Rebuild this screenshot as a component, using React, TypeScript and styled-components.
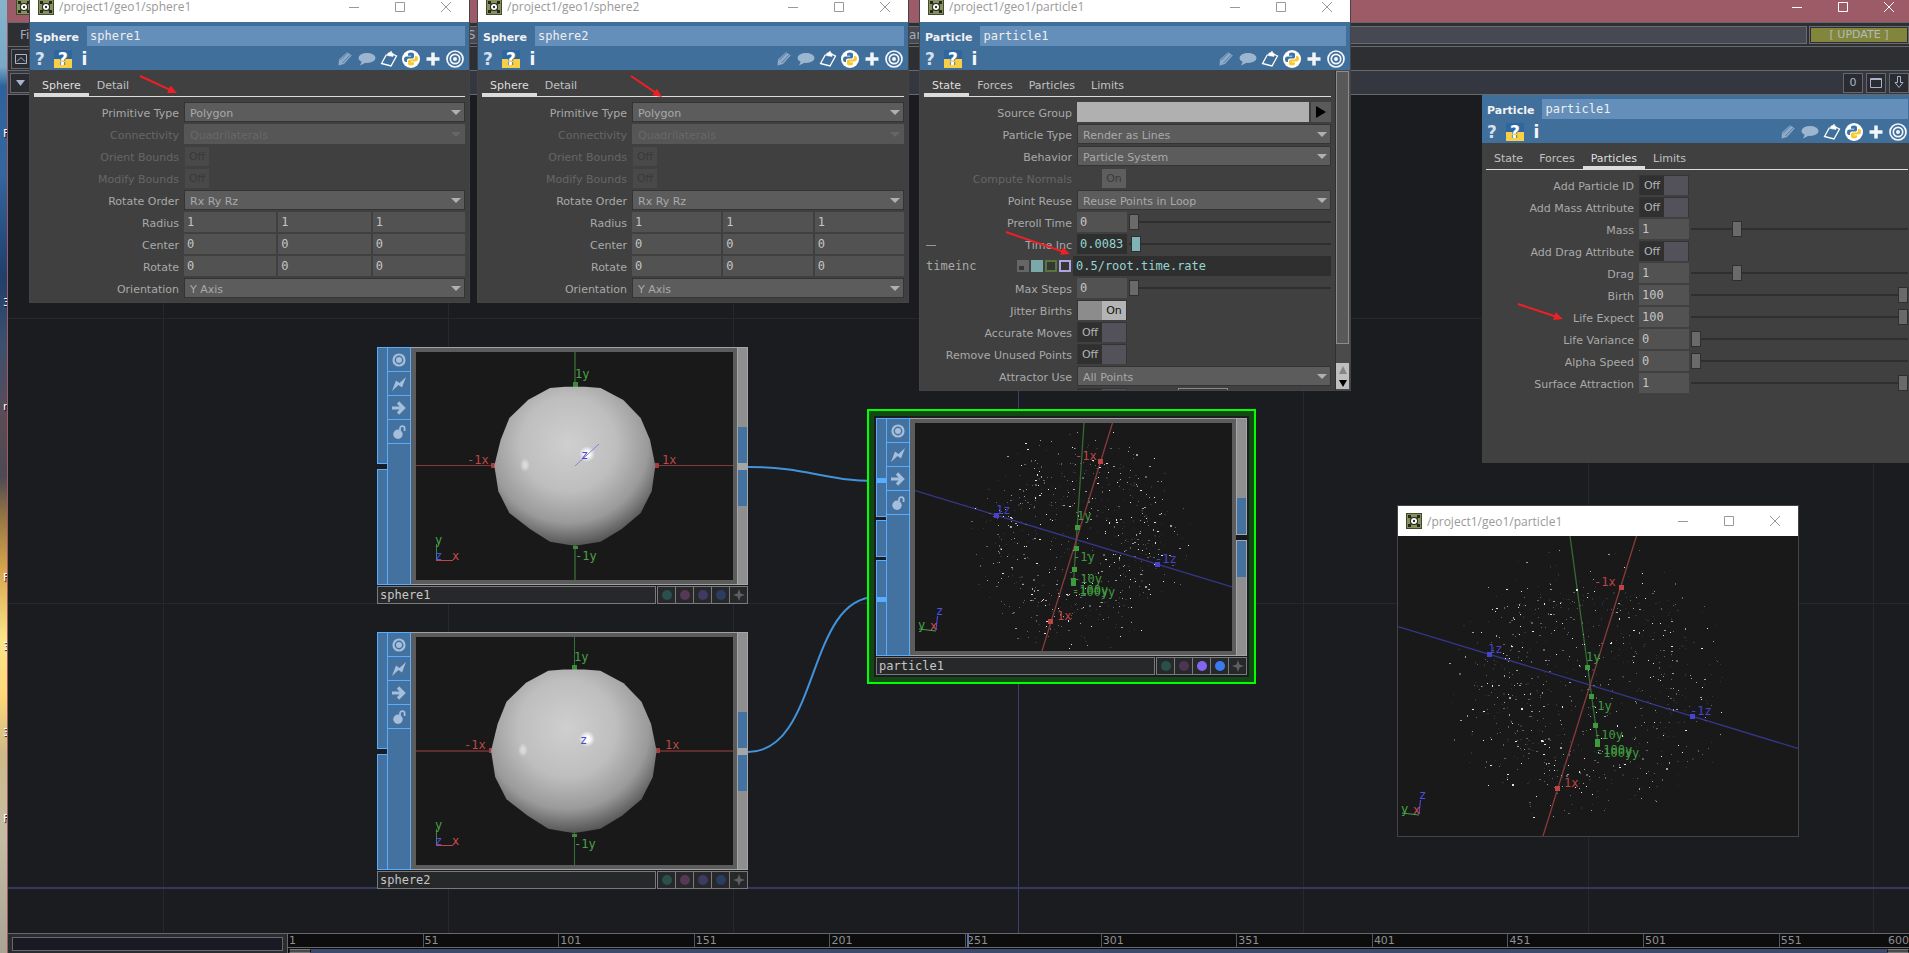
import React, { useId } from "react";
import styled, { createGlobalStyle, css } from "styled-components";

const sans = `"DejaVu Sans", Verdana, sans-serif`;
const mono = `"DejaVu Sans Mono", monospace`;
const system = `"Open Sans", "Segoe UI", sans-serif`;

const GlobalStyle = createGlobalStyle`
  *, *::before, *::after { box-sizing: border-box; }
  body { margin: 0; background: #1a1b1f; font-family: ${sans}; font-size: 11px; overflow: hidden; }
  button, input, select { font: inherit; color: inherit; margin: 0; padding: 0; border: 0; border-radius: 0; outline: 0; }
  button { background: none; display: flex; align-items: center; justify-content: center; }
  svg { display: block; }
`;

/* ---------- application shell ---------- */

const Screen = styled.div`
  position: relative;
  display: flex;
  height: 100vh;
  overflow: hidden;
`;

const Desktop = styled.aside`
  position: relative;
  flex: 0 0 7px;
  overflow: hidden;
  background: linear-gradient(#86b4cc 0, #79a9c6 7%, #2d639c 9%, #3467a0 18%, #203f6c 29%, #3c506f 36%,
    #5a4c56 44%, #4c4a54 50%, #927443 54%, #d9a84c 60%, #fae58a 67%, #fdd878 73%, #cdb987 79%, #c3bda5 88%, #a9a493 100%);
`;

const DesktopLabel = styled.span<{ $top: number }>`
  position: absolute;
  left: 3px;
  top: ${(p) => p.$top}px;
  color: #fff;
  line-height: 12px;
  text-shadow: 1px 1px 1px #000;
`;

const AppFrame = styled.main`
  flex: 1;
  min-width: 0;
  display: flex;
  flex-direction: column;
  border-left: 1px solid #9d5b67;
`;

const AppTitle = styled.header`
  display: flex;
  align-items: center;
  height: 22px;
  padding: 0 0 9px 8px;
  background: #9d5b67;
  color: #fff;
  font: 12px ${system};
`;

const AppTitleText = styled.span`
  padding-left: 445px;
`;

const MenuBar = styled.nav`
  display: flex;
  align-items: center;
  gap: 2px;
  height: 24px;
  border-top: 1px solid #66686c;
  background: #2e2f33;
  color: #a3acbc;
  font-size: 12px;
`;

const MenuButton = styled.button`
  width: 36px;
  padding-left: 12px;
  justify-content: flex-start;
`;

const AddressField = styled.div`
  flex: 1;
  display: flex;
  align-items: center;
  height: 18px;
  padding-left: 417px;
  gap: 426px;
  border: 1px solid #6a6c72;
  background: #464952;
`;

const UpdateButton = styled.button`
  width: 100px;
  height: 18px;
  border: 1px solid #6a6c72;
  background: #82853c;
  box-shadow: inset 0 0 0 1px #2e2f33;
  color: #b3bbba;
  font-size: 11px;
`;

const ToolBar = styled.div<{ $pane?: boolean }>`
  display: flex;
  align-items: center;
  gap: 3px;
  height: ${(p) => (p.$pane ? 25 : 24)}px;
  padding-left: ${(p) => (p.$pane ? 2 : 3)}px;
  border-top: 1px solid #66686c;
  border-bottom: ${(p) => (p.$pane ? "1px solid #66686c" : "0")};
  background: ${(p) => (p.$pane ? "#343740" : "#2e2f33")};
  color: #a9b3cc;
`;

const ToolButton = styled.button`
  width: 20px;
  height: 20px;
  border: 1px solid #66686c;
  background: #2b2c31;
`;

const Spacer = styled.span`
  flex: 1;
`;

const Canvas = styled.section`
  position: relative;
  flex: 1;
  min-height: 0;
  overflow: hidden;
  background-color: #1b1c20;
  background-image:
    linear-gradient(#403e70, #403e70),
    linear-gradient(#37375e, #37375e),
    linear-gradient(90deg, #27282d 1px, transparent 1px),
    linear-gradient(#27282d 1px, transparent 1px);
  background-size: 1px 100%, 100% 2px, 285px 285px, 285px 285px;
  background-position: 1010px 0, 0 792px, 155px 0, 0 223px;
  background-repeat: no-repeat, no-repeat, repeat, repeat;
`;

const Wires = styled.svg`
  position: absolute;
  left: 0;
  top: 0;
  width: 100%;
  height: 100%;
`;

/* ---------- timeline ---------- */

const Timeline = styled.footer`
  display: flex;
  height: 20px;
  border-top: 1px solid #66686c;
  background: #2b2c30;
`;

const TransportPanel = styled.div`
  width: 279px;
  padding: 3px 4px 0 4px;
`;

const TransportBox = styled.div`
  height: 14px;
  border: 1px solid #66686c;
  background: #191a24;
`;

const TimeTrack = styled.div`
  flex: 1;
  display: flex;
  flex-direction: column;
  border-left: 1px solid #66686c;
  background: #0d0d0e;
`;

const Ticks = styled.div`
  display: flex;
  height: 14px;
  border-bottom: 1px solid #66686c;
`;

const Tick = styled.span<{ $frames: number }>`
  position: relative;
  display: flex;
  justify-content: space-between;
  flex: ${(p) => p.$frames} 1 0;
  padding-left: 1px;
  color: #8f8f90;
  line-height: 13px;
  & + & { border-left: 1px solid #55565a; }
`;

const Playhead = styled.i`
  position: absolute;
  left: 1px;
  top: 0;
  width: 2px;
  height: 13px;
  background: #55709f;
`;

const RangeBar = styled.div`
  display: flex;
  justify-content: space-between;
  height: 4px;
  margin: 1px 0 0 1px;
  background: #3c4a6d;
`;

const RangeHandle = styled.span`
  width: 22px;
  border: 1px solid #77777a;
  border-right-color: #111;
  border-left-color: #111;
  background: #4a4a4a;
`;

/* ---------- floating windows ---------- */

const WindowBox = styled.section<{ $left: number; $width: number; $height: number; $top?: number }>`
  position: absolute;
  left: ${(p) => p.$left}px;
  top: ${(p) => p.$top ?? 0}px;
  width: ${(p) => p.$width}px;
  height: ${(p) => p.$height}px;
  display: flex;
  flex-direction: column;
  overflow: hidden;
  border: 1px solid #444448;
  border-top-width: ${(p) => (p.$top ? 1 : 0)}px;
`;

const DockedPanel = styled.section`
  position: absolute;
  top: 0;
  right: 0;
  width: 427px;
  height: 368px;
  display: flex;
  flex-direction: column;
`;

const WindowTitle = styled.header<{ $cut?: boolean }>`
  flex: none;
  display: flex;
  align-items: center;
  gap: 5px;
  height: ${(p) => (p.$cut ? 22 : 30)}px;
  padding: 0 0 ${(p) => (p.$cut ? 9 : 0)}px 8px;
  background: #fff;
  color: #999;
  font: 12px ${system};
`;

const Controls = styled.div<{ $bleed?: boolean }>`
  display: flex;
  margin-left: auto;
  margin-right: ${(p) => (p.$bleed ? -3 : 0)}px;
`;

const ControlButton = styled.button`
  width: 46px;
  height: 12px;
`;

const OpHeader = styled.div<{ $edge: number }>`
  flex: none;
  height: 48px;
  padding: 4px ${(p) => p.$edge}px 0 5px;
  background: #416f9b;
`;

const NameRow = styled.div`
  display: flex;
  align-items: center;
  gap: 8px;
  height: 20px;
`;

const OpType = styled.label`
  color: #f2f2f2;
  font-weight: bold;
  padding-top: 2px;
`;

const NameInput = styled.input`
  flex: 1;
  min-width: 0;
  height: 20px;
  padding: 0 3px;
  background: #648fba;
  color: #eee;
  font: 12px ${mono};
`;

const IconRow = styled.div`
  display: flex;
  align-items: center;
  height: 24px;
  gap: 4px;
  padding: 2px 1px 0 0;
`;

const IconButton = styled.button<{ $w?: number }>`
  width: ${(p) => p.$w ?? 18}px;
  height: 18px;
`;

const OpBody = styled.div`
  flex: 1;
  min-height: 0;
  display: flex;
  background: #404040;
  color: #a9a9a9;
`;

const OpPage = styled.div<{ $edge: number }>`
  flex: 1;
  min-width: 0;
  padding: 6px ${(p) => p.$edge}px 0 4px;
`;

const TabList = styled.div`
  display: flex;
  height: 21px;
  border-bottom: 1px solid #dcdcdc;
`;

const Tab = styled.button<{ $on: boolean }>`
  height: 20px;
  padding: 2px 8px 0;
  border-bottom: 3px solid ${(p) => (p.$on ? "#dcdcdc" : "transparent")};
  color: ${(p) => (p.$on ? "#dedede" : "#c0c0c0")};
`;

const Rows = styled.div`
  display: flex;
  flex-direction: column;
  gap: 2px;
  padding-top: 5px;
`;

const RowBox = styled.div<{ $label: number }>`
  display: grid;
  grid-template-columns: ${(p) => p.$label}px minmax(0, 1fr);
  height: 20px;
`;

const RowLabel = styled.label<{ $off?: boolean }>`
  display: flex;
  align-items: center;
  padding: 2px 5px 0 0;
  color: ${(p) => (p.$off ? "#666" : "#a9a9a9")};
  white-space: nowrap;
  & > span:last-child { margin-left: auto; }
`;

const Dash = styled.span`
  width: 10px;
  height: 1px;
  margin-left: 2px;
  background: #989898;
`;

const Fields = styled.div<{ $count?: number }>`
  display: grid;
  grid-template-columns: ${(p) => (p.$count ? `repeat(${p.$count}, minmax(0, 1fr))` : "50px minmax(0, 1fr)")};
  gap: 2px;
`;

const NumberInput = styled.input<{ $expr?: boolean }>`
  width: 100%;
  min-width: 0;
  height: 20px;
  padding: 0 3px;
  background: ${(p) => (p.$expr ? "#2f2f2f" : "#525252")};
  color: ${(p) => (p.$expr ? "#93d6d3" : "#c4c4c4")};
  font: 12px ${mono};
`;

const MenuBox = styled.span<{ $off?: boolean }>`
  position: relative;
  display: block;
  height: 20px;
  &::after {
    content: "";
    position: absolute;
    right: 4px;
    top: 8px;
    border: 5px solid transparent;
    border-top-color: ${(p) => (p.$off ? "#666" : "#b0b0b0")};
    border-bottom-width: 0;
    pointer-events: none;
  }
`;

const Menu = styled.select`
  appearance: none;
  width: 100%;
  height: 20px;
  padding: 2px 5px 0 5px;
  border: 1px solid #343434;
  background: #5c5c5c;
  color: #a9a9a9;
  &:disabled { border-color: #565656; background: #565656; color: #686868; opacity: 1; }
`;

const ToggleBox = styled.label<{ $on?: boolean; $off?: boolean }>`
  position: relative;
  display: grid;
  grid-template-columns: 1fr 1fr;
  width: 50px;
  height: 20px;
  border: 1px solid ${(p) => (p.$off ? "transparent" : "#343434")};
  line-height: 18px;
  text-align: center;
  input { position: absolute; inset: 0; width: 100%; height: 100%; opacity: 0; }
`;

const ToggleHalf = styled.span<{ $kind: "label" | "grip" | "lit" | "dim" | "dimOff" | "dimOn" | "none" }>`
  padding-top: 1px;
  ${(p) =>
    ({
      label: css`background: #303030; color: #b4b4b4;`,
      grip: css`background: #53525a;`,
      lit: css`background: #b4b4b4; color: #111;`,
      dim: css`background: #8c8c8c;`,
      dimOff: css`background: #494949; color: #393939;`,
      dimOn: css`background: #5e5e5e; color: #3a3a3a;`,
      none: css`background: none;`,
    })[p.$kind]}
`;

const Slider = styled.input<{ $live?: boolean }>`
  appearance: none;
  width: 100%;
  height: 20px;
  background: linear-gradient(#2f2f2f, #2f2f2f) 0 9px / 100% 2px no-repeat;
  &::-webkit-slider-thumb {
    appearance: none;
    width: 10px;
    height: 16px;
    border: 1px solid #2f2f2f;
    background: ${(p) => (p.$live ? "#7fb3b6" : "#6a6a6a")};
  }
`;

const GroupRow = styled.div`
  display: flex;
  gap: 2px;
`;

const GroupInput = styled.input`
  flex: 1;
  min-width: 0;
  height: 20px;
  padding: 0 4px;
  background: #b0b0b0;
  color: #111;
`;

const GroupButton = styled.button`
  width: 20px;
  height: 20px;
  background: #5a5a5a;
`;

const ExprRow = styled.div`
  display: flex;
  align-items: center;
  gap: 2px;
  height: 20px;
  padding-left: 2px;
  color: #a9a9a9;
  font: 12px ${mono};
`;

const ExprLabel = styled.label`
  flex: 0 0 89px;
`;

const ModeButton = styled.button<{ $color: string; $fill?: boolean }>`
  flex: 0 0 12px;
  height: 12px;
  border: 2px solid ${(p) => p.$color};
  background: ${(p) => (p.$fill ? p.$color : "#363636")};
`;

const StubRow = styled.div`
  display: grid;
  grid-template-columns: 50px 51px 50px;
  height: 20px;
`;

const StubField = styled.div`
  grid-column: 3;
  border: 1px solid #8a8a8a;
  background: #3a3a3a;
`;

const ScrollBar = styled.div`
  flex: 0 0 15px;
  display: flex;
  flex-direction: column;
  padding: 1px 1px 1px 0;
  border-left: 1px solid #303030;
  background: #4b4b4b;
`;

const ScrollThumb = styled.div`
  height: 273px;
  border: 1px solid #8c8c8c;
  background: #595959;
`;

const ScrollSteps = styled.div`
  margin-top: auto;
  height: 26px;
  display: flex;
  flex-direction: column;
  justify-content: space-around;
  align-items: center;
  background: #bfbfbf;
`;

/* ---------- network nodes ---------- */

const NodeBox = styled.article<{ $x: number; $y: number; $selected?: boolean }>`
  position: absolute;
  left: ${(p) => p.$x}px;
  top: ${(p) => p.$y}px;
  width: 371px;
  display: flex;
  flex-direction: column;
  gap: 1px;
  background: #1b1c20;
  box-shadow: ${(p) => (p.$selected ? "0 0 0 2px #1b1c20, 0 0 0 7px #124812, 0 0 0 9px #00ff00" : "none")};
`;

const NodeMain = styled.div`
  display: flex;
  height: 238px;
`;

const Inputs = styled.div<{ $gap: number }>`
  display: flex;
  flex-direction: column;
  gap: ${(p) => p.$gap}px;
  width: 10px;
`;

const InputSegment = styled.div<{ $grow: number; $plug?: number }>`
  position: relative;
  flex: ${(p) => p.$grow} 1 0;
  border: 1px solid #58adff;
  border-right: 0;
  background: #4472a0;
  ${(p) =>
    p.$plug &&
    css`
      &::after { content: ""; position: absolute; left: -1px; top: ${p.$plug}px; width: 10px; height: 5px; background: #58adff; }
    `}
`;

const NodeFlags = styled.div`
  width: 24px;
  border: 1px solid #58adff;
  background: #4472a0;
`;

const NodeFlag = styled.button`
  width: 100%;
  height: 24px;
  border-bottom: 1px solid #58adff;
  color: #a4bedb;
`;

const Viewer = styled.div`
  flex: 1;
  padding: 4px 4px 4px 5px;
  border: solid #a2a2a4;
  border-width: 1px 0;
  background: #5c5c5c;
`;

const Scene = styled.svg`
  width: 100%;
  height: 100%;
  background: #191919;
  font: 12px ${mono};
`;

const Outputs = styled.div`
  display: flex;
  flex-direction: column;
  justify-content: center;
  width: 11px;
  border: 1px solid #a6a6a8;
  background: #8f8f8f;
`;

const OutputHalf = styled.div`
  height: 36px;
  background: #4472a0;
`;

const OutputPlug = styled.div<{ $wired: boolean }>`
  height: 7px;
  margin: 0 -1px;
  border: solid #a6a6a8;
  border-width: 1px 0;
  background: ${(p) => (p.$wired ? "#a6a6a8" : "#17181b")};
`;

const NodeFooter = styled.div`
  display: flex;
  gap: 1px;
  height: 18px;
`;

const NodeName = styled.span`
  flex: 1;
  padding-left: 2px;
  border: 1px solid #7a7a7e;
  background: #27282a;
  color: #c6c6c6;
  font: 12px ${mono};
  line-height: 16px;
`;

const ViewFlags = styled.div`
  display: flex;
  border: solid #7a7a7e;
  border-width: 1px 1px 1px 0;
`;

const ViewFlag = styled.button`
  width: 18px;
  height: 16px;
  border-left: 1px solid #7a7a7e;
  background: #27282a;
`;

const FlagDot = styled.i<{ $color: string }>`
  width: 10px;
  height: 10px;
  border-radius: 50%;
  background: ${(p) => p.$color};
`;

const Annotations = styled.svg`
  position: absolute;
  left: 0;
  top: 0;
  width: 100%;
  height: 100%;
  pointer-events: none;
`;

/* ---------- icons ---------- */

const AppIcon = () => (
  <svg width="16" height="16" viewBox="0 0 16 16">
    <path d="M0 0h16v16H0z" fill="#424a30" />
    <path d="M1 1h14v14H1z" fill="#87915f" />
    <path d="M3 3l10 10M13 3L3 13" stroke="#15180e" strokeWidth="1.4" />
    <path d="M2 2h3v3H2zM11 2h3v3h-3zM2 11h3v3H2zM11 11h3v3h-3z" fill="#23281a" />
    <circle cx="8" cy="8" r="4" fill="#23281a" />
    <circle cx="8" cy="8" r="3" fill="#fff" />
    <circle cx="8" cy="8" r="1.2" fill="#333" />
  </svg>
);

const WindowControls = ({ bleed }: { bleed?: boolean }) => (
  <Controls $bleed={bleed}>
    <ControlButton aria-label="Minimize">
      <svg width="10" height="10"><path d="M0 5.5h10" stroke="currentColor" /></svg>
    </ControlButton>
    <ControlButton aria-label="Maximize">
      <svg width="10" height="10"><path d="M.5.5h9v9h-9z" fill="none" stroke="currentColor" /></svg>
    </ControlButton>
    <ControlButton aria-label="Close">
      <svg width="10" height="10"><path d="M0 0l10 10M10 0L0 10" stroke="currentColor" /></svg>
    </ControlButton>
  </Controls>
);

const Glyph = styled.b<{ $color: string }>`
  color: ${(p) => p.$color};
  font-size: 17px;
  line-height: 18px;
`;

const PyHelp = styled(Glyph)`
  display: block;
  width: 18px;
  height: 18px;
  background: linear-gradient(#2e67a0 50%, #f9cf46 50%);
  text-shadow: 1px 0 #416f9b, -1px 0 #416f9b;
`;

const PencilIcon = () => (
  <svg width="18" height="18" viewBox="0 0 18 18" fill="#8fabc9">
    <path d="M2.500 15.500l.5-6L11 2.200l4.800 3L8 14z" />
    <path d="M4 10.500l7.500-7.500M6.500 13l8-8.500" stroke="#416f9b" strokeWidth=".8" />
  </svg>
);

const CommentIcon = () => (
  <svg width="18" height="18" viewBox="0 0 18 18" fill="#9db6d0">
    <ellipse cx="9" cy="8" rx="8.500" ry="5" />
    <path d="M4 11L2 15.500l6-3z" />
  </svg>
);

const ClipboardIcon = () => (
  <svg width="18" height="18" viewBox="0 0 18 18" fill="none" stroke="#fff">
    <path d="M6.500 4.500L1.500 13.500l9.500 2.500 5.500-10-4-2" strokeWidth="1.300" />
    <path d="M7 5.500l1-2.500 2-.5L11 1l1 2 1.500 1-.5 2.500z" fill="#fff" strokeWidth=".5" />
  </svg>
);

const PythonIcon = () => (
  <svg width="18" height="18" viewBox="0 0 18 18">
    <circle cx="9" cy="9" r="9" fill="#fff" />
    <path d="M9 2.500c-2.500 0-3 .8-3 2v1.300h3.200v.7H4.300C3 6.500 2 7.500 2 9.300s.8 2.700 2 2.700h1V10.500c0-1.200.9-2 2-2h3.200c1 0 1.800-.8 1.800-1.800V4.500c0-1.200-1-2-3-2z" fill="#3a75a8" />
    <path d="M9 15.500c2.500 0 3-.8 3-2v-1.300H8.800v-.7h4.900c1.300 0 2.300-1 2.300-2.800S15.200 6 14 6h-1v1.500c0 1.200-.9 2-2 2H7.800c-1 0-1.800.8-1.800 1.800v2.200c0 1.200 1 2 3 2z" fill="#fbc92e" />
  </svg>
);

const PlusIcon = () => (
  <svg width="18" height="18" viewBox="0 0 18 18">
    <path d="M9 2.500v13M2.500 9h13" stroke="#f2f5f8" strokeWidth="3.500" />
  </svg>
);

const TargetIcon = () => (
  <svg width="18" height="18" viewBox="0 0 18 18" fill="none" stroke="#f4f7fa" strokeWidth="1.700">
    <circle cx="9" cy="9" r="8" />
    <circle cx="9" cy="9" r="4.700" />
    <circle cx="9" cy="9" r="2" fill="#f4f7fa" stroke="none" />
  </svg>
);

const ViewerIcon = () => (
  <svg width="14" height="14" viewBox="0 0 14 14" fill="none" stroke="currentColor">
    <circle cx="7" cy="7" r="5.500" strokeWidth="2.200" />
    <circle cx="7" cy="7" r="3" fill="currentColor" stroke="none" />
  </svg>
);

const BoltIcon = () => (
  <svg width="16" height="16" viewBox="0 0 16 16" fill="currentColor">
    <path d="M1 15L5 4.500l3.500 2.500L15 1l-4 10.500L7.500 9z" />
  </svg>
);

const ArrowIcon = () => (
  <svg width="14" height="14" viewBox="0 0 14 14" fill="none" stroke="currentColor" strokeWidth="3.200">
    <path d="M0 7h11M6 1.500L11.500 7 6 12.500" />
  </svg>
);

const LockIcon = () => (
  <svg width="14" height="14" viewBox="0 0 14 14" fill="currentColor">
    <circle cx="6" cy="9.200" r="4.700" />
    <path d="M8 5.500V3.500a2.300 2.300 0 0 1 4.600 0V6" fill="none" stroke="currentColor" strokeWidth="1.800" />
  </svg>
);

const StarIcon = () => (
  <svg width="12" height="12" viewBox="0 0 12 12" fill="#606062">
    <path d="M6 0l1.500 4.500L12 6 7.500 7.500 6 12 4.500 7.500 0 6l4.500-1.500z" />
  </svg>
);

/* ---------- parameter rows ---------- */

type Row =
  | { kind: "menu"; label: string; value: string; off?: boolean }
  | { kind: "toggle"; label: string; on?: boolean; off?: boolean }
  | { kind: "vector"; label: string; values: string[] }
  | { kind: "slider"; label: string; value: string; at: number; live?: boolean }
  | { kind: "group"; label: string }
  | { kind: "expr"; label: string; value: string }
  | { kind: "stub" };

const Toggle = ({ id, on, off }: { id: string; on?: boolean; off?: boolean }) => (
  <ToggleBox $off={off}>
    <input id={id} type="checkbox" defaultChecked={on} disabled={off} />
    <ToggleHalf $kind={off ? (on ? "none" : "dimOff") : on ? "dim" : "label"}>{on ? "" : "Off"}</ToggleHalf>
    <ToggleHalf $kind={off ? (on ? "dimOn" : "none") : on ? "lit" : "grip"}>{on ? "On" : ""}</ToggleHalf>
  </ToggleBox>
);

const ParamRow = ({ row, label }: { row: Row; label: number }) => {
  const id = useId();
  if (row.kind === "expr")
    return (
      <ExprRow>
        <ExprLabel htmlFor={id}>{row.label}</ExprLabel>
        <ModeButton $color="#666" aria-label="Constant mode">
          <svg width="8" height="8"><path d="M0 0h8v8H5V4H0z" fill="#666" /></svg>
        </ModeButton>
        <ModeButton $color="#7ba9a9" $fill aria-label="Expression mode" />
        <ModeButton $color="#56763c" aria-label="Export mode" />
        <ModeButton $color="#b1a3e3" aria-label="Bind mode" />
        <NumberInput id={id} $expr defaultValue={row.value} />
      </ExprRow>
    );
  if (row.kind === "stub")
    return (
      <RowBox $label={label}>
        <span />
        <StubRow>
          <ToggleBox>
            <input id={id} type="checkbox" aria-label="Attractor option" />
            <ToggleHalf $kind="label" />
            <ToggleHalf $kind="grip" />
          </ToggleBox>
          <StubField />
        </StubRow>
      </RowBox>
    );
  const off = "off" in row ? row.off : false;
  return (
    <RowBox $label={label}>
      <RowLabel htmlFor={id} $off={off}>
        {row.kind === "slider" && row.live && <Dash />}
        <span>{row.label}</span>
      </RowLabel>
      {row.kind === "menu" && (
        <MenuBox $off={off}>
          <Menu id={id} disabled={off}>
            <option>{row.value}</option>
          </Menu>
        </MenuBox>
      )}
      {row.kind === "toggle" && <Toggle id={id} on={row.on} off={off} />}
      {row.kind === "vector" && (
        <Fields $count={row.values.length}>
          {row.values.map((v, i) => (
            <NumberInput key={i} id={i ? undefined : id} aria-label={`${row.label} ${i + 1}`} defaultValue={v} />
          ))}
        </Fields>
      )}
      {row.kind === "slider" && (
        <Fields>
          <NumberInput id={id} $expr={row.live} defaultValue={row.value} />
          <Slider type="range" aria-label={`${row.label} slider`} $live={row.live} min={0} max={100} defaultValue={row.at} />
        </Fields>
      )}
      {row.kind === "group" && (
        <GroupRow>
          <GroupInput id={id} />
          <GroupButton aria-label="Pick group">
            <svg width="10" height="12"><path d="M0 0l10 6-10 6z" fill="#000" /></svg>
          </GroupButton>
        </GroupRow>
      )}
    </RowBox>
  );
};

type OpProps = {
  type: string;
  name: string;
  tabs: string[];
  active: string;
  rows: Row[];
  label: number;
  edge?: number;
  scroll?: boolean;
};

const Gap = styled.span`
  width: 1px;
`;

const OpPanel = ({ type, name, tabs, active, rows, label, edge = 4, scroll }: OpProps) => {
  const id = useId();
  return (
    <>
      <OpHeader $edge={edge}>
        <NameRow>
          <OpType htmlFor={id}>{type}</OpType>
          <NameInput id={id} defaultValue={name} />
        </NameRow>
        <IconRow>
          <IconButton $w={10} aria-label="Help"><Glyph $color="#d3dfeb">?</Glyph></IconButton>
          <Gap />
          <IconButton aria-label="Python help"><PyHelp $color="#fff">?</PyHelp></IconButton>
          <Gap />
          <IconButton $w={7} aria-label="Info"><Glyph $color="#f4f7fa">i</Glyph></IconButton>
          <Spacer />
          <IconButton aria-label="Edit"><PencilIcon /></IconButton>
          <IconButton aria-label="Comment"><CommentIcon /></IconButton>
          <IconButton aria-label="Copy parameters"><ClipboardIcon /></IconButton>
          <IconButton aria-label="Python"><PythonIcon /></IconButton>
          <IconButton aria-label="Add"><PlusIcon /></IconButton>
          <IconButton aria-label="Viewer"><TargetIcon /></IconButton>
        </IconRow>
      </OpHeader>
      <OpBody>
        <OpPage $edge={edge}>
          <TabList role="tablist">
            {tabs.map((t) => (
              <Tab key={t} role="tab" aria-selected={t === active} $on={t === active}>{t}</Tab>
            ))}
          </TabList>
          <Rows>
            {rows.map((r, i) => <ParamRow key={i} row={r} label={label} />)}
          </Rows>
        </OpPage>
        {scroll && (
          <ScrollBar>
            <ScrollThumb />
            <ScrollSteps>
              <svg width="8" height="8"><path d="M4 0l4 8H0z" fill="#858585" /></svg>
              <svg width="8" height="8"><path d="M0 1h8L4 8z" fill="#000" /></svg>
            </ScrollSteps>
          </ScrollBar>
        )}
      </OpBody>
    </>
  );
};

const sphereRows: Row[] = [
  { kind: "menu", label: "Primitive Type", value: "Polygon" },
  { kind: "menu", label: "Connectivity", value: "Quadrilaterals", off: true },
  { kind: "toggle", label: "Orient Bounds", off: true },
  { kind: "toggle", label: "Modify Bounds", off: true },
  { kind: "menu", label: "Rotate Order", value: "Rx Ry Rz" },
  { kind: "vector", label: "Radius", values: ["1", "1", "1"] },
  { kind: "vector", label: "Center", values: ["0", "0", "0"] },
  { kind: "vector", label: "Rotate", values: ["0", "0", "0"] },
  { kind: "menu", label: "Orientation", value: "Y Axis" },
];

const stateRows: Row[] = [
  { kind: "group", label: "Source Group" },
  { kind: "menu", label: "Particle Type", value: "Render as Lines" },
  { kind: "menu", label: "Behavior", value: "Particle System" },
  { kind: "toggle", label: "Compute Normals", on: true, off: true },
  { kind: "menu", label: "Point Reuse", value: "Reuse Points in Loop" },
  { kind: "slider", label: "Preroll Time", value: "0", at: 0 },
  { kind: "slider", label: "Time Inc", value: "0.0083", at: 1, live: true },
  { kind: "expr", label: "timeinc", value: "0.5/root.time.rate" },
  { kind: "slider", label: "Max Steps", value: "0", at: 0 },
  { kind: "toggle", label: "Jitter Births", on: true },
  { kind: "toggle", label: "Accurate Moves" },
  { kind: "toggle", label: "Remove Unused Points" },
  { kind: "menu", label: "Attractor Use", value: "All Points" },
  { kind: "stub" },
];

const particleRows: Row[] = [
  { kind: "toggle", label: "Add Particle ID" },
  { kind: "toggle", label: "Add Mass Attribute" },
  { kind: "slider", label: "Mass", value: "1", at: 20 },
  { kind: "toggle", label: "Add Drag Attribute" },
  { kind: "slider", label: "Drag", value: "1", at: 20 },
  { kind: "slider", label: "Birth", value: "100", at: 100 },
  { kind: "slider", label: "Life Expect", value: "100", at: 100 },
  { kind: "slider", label: "Life Variance", value: "0", at: 0 },
  { kind: "slider", label: "Alpha Speed", value: "0", at: 0 },
  { kind: "slider", label: "Surface Attraction", value: "1", at: 100 },
];

const particleTabs = ["State", "Forces", "Particles", "Limits"];

/* ---------- viewers ---------- */

const sphereOutline =
  "-75,-234 -30,-238 30,-238 77,-234 145,-198 197,-144 225,-79 241,-1 230,76 197,141 140,189 77,227 30,235 0,239 -30,235 -75,227 -135,189 -197,141 -230,76 -242,-1 -223,-79 -197,-144 -140,-199";

const SphereScene = ({ second }: { second?: boolean }) => {
  const id = useId();
  const s = second ? 1.028 : 1;
  const cx = 159 - (second ? 1 : 0);
  const top = second ? 33 : 35;
  const bottom = second ? 197 : 194;
  const left = second ? 76 : 78;
  const right = second ? 241 : 240;
  return (
    <Scene viewBox="0 0 317 228">
      <defs>
        <radialGradient id={`${id}b`} cx=".46" cy=".36" r=".66">
          <stop offset="0" stopColor="#cfcfcf" />
          <stop offset=".45" stopColor="#bebebe" />
          <stop offset=".75" stopColor="#9a9a9a" />
          <stop offset="1" stopColor="#4c4c4c" />
        </radialGradient>
        <radialGradient id={`${id}h`}>
          <stop offset="0" stopColor="#fff" />
          <stop offset=".35" stopColor="#fff" stopOpacity=".95" />
          <stop offset="1" stopColor="#fff" stopOpacity="0" />
        </radialGradient>
      </defs>
      <path d={second ? "M0 114h317" : "M0 113.500h317"} stroke={second ? "#5c2e2e" : "#843838"} strokeWidth={second ? 2 : 1} />
      <path d={second ? "M158.500 0v228" : "M159 0v228"} stroke={second ? "#377037" : "#2f4f2c"} strokeWidth={second ? 1 : 2} />
      <path d={`M${cx - 2} ${top - 5}h5v5h-5zM${cx - 2} ${bottom}h5v3h-5z`} fill="#3c8a3c" />
      <path d={`M${left - 3} 111h4v5h-4zM${right - 1} 111h4v5h-4z`} fill="#a43c3c" />
      <polygon points={sphereOutline} transform={`translate(${cx} 114) scale(${s / 3})`} fill={`url(#${id}b)`} />
      <circle cx="171" cy="102" r="8" fill={`url(#${id}h)`} />
      <ellipse cx={second ? 107 : 109} cy="113" rx="5" ry="7" fill={`url(#${id}h)`} opacity=".45" />
      {!second && <path d="M159 114l24-22" stroke="#8484dc" strokeWidth="1" />}
      <g fill="#48a048">
        <text x={cx} y={second ? 24 : 26}>1y</text>
        <text x={cx} y={second ? 211 : 208}>-1y</text>
      </g>
      <g fill="#bd4848">
        <text x={second ? 48 : 51} y="112">-1x</text>
        <text x={second ? 249 : 246} y="112">1x</text>
      </g>
      <text x={second ? 164 : 165} y="107" fill="#4646d4">z</text>
      <path d="M20.500 192v16" stroke="#3c8a3c" />
      <path d="M20 208.500h17" stroke="#bd4848" />
      <text x="19" y="192" fill="#48a048">y</text>
      <text x="19" y="208" fill="#5050ee">z</text>
      <text x="36" y="208" fill="#d04c4c">x</text>
    </Scene>
  );
};

/* Particles scattered through a thick spherical shell, grouped by brightness. */
const cloud = (cx: number, cy: number, radius: number, count: number, seed: number) => {
  let s = seed;
  const rand = () => {
    s = (s * 1664525 + 1013904223) % 4294967296;
    return s / 4294967296;
  };
  const paths = ["", "", "", ""];
  for (let i = 0; i < count; i++) {
    const z = rand() * 2 - 1;
    const a = rand() * Math.PI * 2;
    const spread = radius * (0.62 + 0.42 * Math.pow(rand(), 1.6));
    const f = Math.sqrt(1 - z * z) * spread;
    const x = Math.round(cx + Math.cos(a) * f);
    const y = Math.round(cy + Math.sin(a) * f);
    const k = rand();
    const w = rand() > 0.75 ? 2 : 1;
    const h = rand() > 0.88 ? 2 : 1;
    paths[k < 0.42 ? 0 : k < 0.7 ? 1 : k < 0.88 ? 2 : 3] += `M${x} ${y}h${w}v${h}h-${w}z`;
  }
  return paths;
};

type Mark = { text: string; x: number; y: number; mx: number; my: number; axis: "x" | "y" | "z" };
const axisColor = { x: "#bd4444", y: "#3f9a3f", z: "#4444cc" };

type ParticleView = { w: number; h: number; lines: [string, string][]; marks: Mark[]; points: string[]; gizmoY: number };

const nodeView: ParticleView = {
  w: 317,
  h: 228,
  lines: [
    ["M0 67.500L317 164", "#36368c"],
    ["M169 0L158.500 159", "#356a35"],
    ["M197.500 0L127 228", "#863c3c"],
  ],
  marks: [
    { text: "-1x", x: 160, y: 37, mx: 185, my: 38, axis: "x" },
    { text: "1x", x: 142, y: 197, mx: 135, my: 198, axis: "x" },
    { text: "1z", x: 81, y: 91, mx: 81, my: 92, axis: "z" },
    { text: "-1z", x: 240, y: 140, mx: 242, my: 141, axis: "z" },
    { text: "1y", x: 162, y: 97, mx: 162, my: 104, axis: "y" },
    { text: "-1y", x: 158, y: 138, mx: 161, my: 125, axis: "y" },
    { text: "-10y", x: 158, y: 160, mx: 159, my: 146, axis: "y" },
    { text: "-100y", x: 157, y: 171, mx: 158, my: 157, axis: "y" },
    { text: "-100yy", x: 157, y: 173, mx: 158, my: 160, axis: "y" },
  ],
  points: cloud(162, 118, 112, 680, 77),
  gizmoY: 192,
};

const windowView: ParticleView = {
  w: 400,
  h: 300,
  lines: [
    ["M0 90.500L400 212.500", "#36368c"],
    ["M172 0L200 207", "#356a35"],
    ["M238.500 0L145 300", "#863c3c"],
  ],
  marks: [
    { text: "-1x", x: 196, y: 50, mx: 223, my: 51, axis: "x" },
    { text: "1x", x: 166, y: 251, mx: 159, my: 252, axis: "x" },
    { text: "1z", x: 90, y: 117, mx: 91, my: 118, axis: "z" },
    { text: "-1z", x: 292, y: 179, mx: 294, my: 180, axis: "z" },
    { text: "1y", x: 188, y: 125, mx: 189, my: 131, axis: "y" },
    { text: "-1y", x: 192, y: 174, mx: 193, my: 160, axis: "y" },
    { text: "-10y", x: 196, y: 203, mx: 197, my: 189, axis: "y" },
    { text: "-100y", x: 198, y: 218, mx: 199, my: 205, axis: "y" },
    { text: "-100yy", x: 198, y: 221, mx: 199, my: 208, axis: "y" },
  ],
  points: cloud(191, 150, 140, 820, 4242),
  gizmoY: 263,
};

const ParticleScene = ({ view }: { view: ParticleView }) => (
  <Scene viewBox={`0 0 ${view.w} ${view.h}`}>
    {view.lines.map(([d, c]) => <path key={d} d={d} stroke={c} strokeWidth="1.300" />)}
    {view.points.map((d, i) => <path key={i} d={d} fill={["#333", "#626262", "#a0a0a0", "#e4e4e4"][i]} />)}
    {view.marks.map((m) => (
      <g key={m.text} fill={axisColor[m.axis]}>
        <rect x={m.mx - 2} y={m.my - 2} width="5" height="5" />
        <text x={m.x} y={m.y}>{m.text}</text>
      </g>
    ))}
    <g transform={`translate(0 ${view.gizmoY})`}>
      <path d="M4 14l17 2" stroke="#48a048" />
      <path d="M22.500 1L21 15" stroke="#5050ee" />
      <text x="21" y="0" fill="#5050ee">z</text>
      <text x="3" y="14" fill="#48a048">y</text>
      <text x="15" y="15" fill="#d04c4c">x</text>
    </g>
  </Scene>
);

type NodeProps = {
  name: string;
  x: number;
  y: number;
  selected?: boolean;
  inputs: { grow: number; plug?: number }[];
  wired: boolean;
  colors: string[];
  children: React.ReactNode;
};

const Node = ({ name, x, y, selected, inputs, wired, colors, children }: NodeProps) => (
  <NodeBox $x={x} $y={y} $selected={selected}>
    <NodeMain>
      <Inputs $gap={selected ? 3 : 5}>
        {inputs.map((p, i) => <InputSegment key={i} $grow={p.grow} $plug={p.plug} />)}
      </Inputs>
      <NodeFlags>
        <NodeFlag aria-label="Viewer active"><ViewerIcon /></NodeFlag>
        <NodeFlag aria-label="Bypass"><BoltIcon /></NodeFlag>
        <NodeFlag aria-label="Clone"><ArrowIcon /></NodeFlag>
        <NodeFlag aria-label="Lock"><LockIcon /></NodeFlag>
      </NodeFlags>
      <Viewer>{children}</Viewer>
      <Outputs>
        <OutputHalf />
        <OutputPlug $wired={wired} />
        <OutputHalf />
      </Outputs>
    </NodeMain>
    <NodeFooter>
      <NodeName>{name}</NodeName>
      <ViewFlags>
        {colors.map((c) => <ViewFlag key={c} aria-label="Flag"><FlagDot $color={c} /></ViewFlag>)}
        <ViewFlag aria-label="Activate viewer"><StarIcon /></ViewFlag>
      </ViewFlags>
    </NodeFooter>
  </NodeBox>
);

const dimFlags = ["#29504d", "#563756", "#3f3a60", "#2b3d60"];
const liveFlags = ["#29504d", "#4d3450", "#8466ee", "#3a7bf2"];

/* ---------- annotation arrows ---------- */

const arrows = [
  [140, 76, 177, 93],
  [631, 76, 662, 97],
  [1006, 232, 1070, 254],
  [1518, 304, 1563, 319],
];

const RedArrow = ({ at: [x1, y1, x2, y2] }: { at: number[] }) => {
  const length = Math.hypot(x2 - x1, y2 - y1);
  const angle = (Math.atan2(y2 - y1, x2 - x1) * 180) / Math.PI;
  return (
    <g transform={`translate(${x1} ${y1}) rotate(${angle})`} fill="#ee2026">
      <path d={`M0-1L${length - 7}-1V1H0zM${length - 9}-4L${length} 0 ${length - 9} 4z`} />
    </g>
  );
};

const frames = [1, 51, 101, 151, 201, 251, 301, 351, 401, 451, 501, 551];

const desktopLabels: [string, number][] = [
  ["F", 128], ["3", 297], ["r", 401], ["F", 572], ["3", 641], ["3", 727], ["F", 813],
];

export default function App() {
  return (
    <Screen>
      <GlobalStyle />
      <Desktop>
        {desktopLabels.map(([t, y]) => <DesktopLabel key={y} $top={y}>{t}</DesktopLabel>)}
      </Desktop>
      <AppFrame>
        <AppTitle>
          <AppIcon />
          <AppTitleText>At</AppTitleText>
          <WindowControls bleed />
        </AppTitle>
        <MenuBar>
          <MenuButton>File</MenuButton>
          <AddressField>
            <span>.S</span>
            <span>nar</span>
          </AddressField>
          <UpdateButton>[ UPDATE ]</UpdateButton>
        </MenuBar>
        <ToolBar>
          <ToolButton aria-label="Palette">
            <svg width="12" height="10" fill="none" stroke="currentColor"><path d="M.5.5h11v9H.5zM2 7.500l4-4 4 4" /></svg>
          </ToolButton>
        </ToolBar>
        <ToolBar $pane>
          <ToolButton aria-label="Pane menu">
            <svg width="9" height="6"><path d="M0 0h9L4.500 6z" fill="currentColor" /></svg>
          </ToolButton>
          <Spacer />
          <ToolButton>0</ToolButton>
          <ToolButton aria-label="Maximize pane">
            <svg width="12" height="12" fill="none" stroke="currentColor"><path d="M.5 1.500h11v9H.5zM0 2.500h12" /></svg>
          </ToolButton>
          <ToolButton aria-label="Pane down">
            <svg width="10" height="13" fill="none" stroke="currentColor"><path d="M3.500.5h3v6h2.500L5 11.500 1 6.500h2.500z" /></svg>
          </ToolButton>
        </ToolBar>

        <Canvas>
          <Wires fill="none" stroke="#4193dc" strokeWidth="2">
            <path d="M740 372C800 372 815 386 868 386" />
            <path d="M740 657C812 657 798 502 868 502" />
          </Wires>
          <Node name="sphere1" x={369} y={252} inputs={[{ grow: 1 }, { grow: 1 }]} wired colors={dimFlags}>
            <SphereScene />
          </Node>
          <Node name="sphere2" x={369} y={537} inputs={[{ grow: 1 }, { grow: 1 }]} wired colors={dimFlags}>
            <SphereScene second />
          </Node>
          <Node
            name="particle1"
            x={868}
            y={323}
            selected
            inputs={[{ grow: 100, plug: 59 }, { grow: 36 }, { grow: 96, plug: 36 }]}
            wired={false}
            colors={liveFlags}
          >
            <ParticleScene view={nodeView} />
          </Node>
          <DockedPanel>
            <OpPanel type="Particle" name="particle1" tabs={particleTabs} active="Particles" rows={particleRows} label={153} edge={1} />
          </DockedPanel>
        </Canvas>

        <Timeline>
          <TransportPanel><TransportBox /></TransportPanel>
          <TimeTrack>
            <Ticks>
              {frames.map((f) => (
                <Tick key={f} $frames={f === 551 ? 48 : 50}>
                  {f === 251 && <Playhead />}
                  <span>{f}</span>
                  {f === 551 && <span>600</span>}
                </Tick>
              ))}
            </Ticks>
            <RangeBar><RangeHandle /><RangeHandle /></RangeBar>
          </TimeTrack>
        </Timeline>
      </AppFrame>

      <WindowBox $left={29} $width={441} $height={303}>
        <WindowTitle $cut><AppIcon /><span>/project1/geo1/sphere1</span><WindowControls /></WindowTitle>
        <OpPanel type="Sphere" name="sphere1" tabs={["Sphere", "Detail"]} active="Sphere" rows={sphereRows} label={150} />
      </WindowBox>
      <WindowBox $left={477} $width={432} $height={303}>
        <WindowTitle $cut><AppIcon /><span>/project1/geo1/sphere2</span><WindowControls /></WindowTitle>
        <OpPanel type="Sphere" name="sphere2" tabs={["Sphere", "Detail"]} active="Sphere" rows={sphereRows} label={150} />
      </WindowBox>
      <WindowBox $left={919} $width={432} $height={391}>
        <WindowTitle $cut><AppIcon /><span>/project1/geo1/particle1</span><WindowControls /></WindowTitle>
        <OpPanel type="Particle" name="particle1" tabs={particleTabs} active="State" rows={stateRows} label={153} scroll />
      </WindowBox>
      <WindowBox $left={1397} $top={505} $width={402} $height={332}>
        <WindowTitle><AppIcon /><span>/project1/geo1/particle1</span><WindowControls /></WindowTitle>
        <ParticleScene view={windowView} />
      </WindowBox>

      <Annotations>
        {arrows.map((a) => <RedArrow key={a[0]} at={a} />)}
      </Annotations>
    </Screen>
  );
}
